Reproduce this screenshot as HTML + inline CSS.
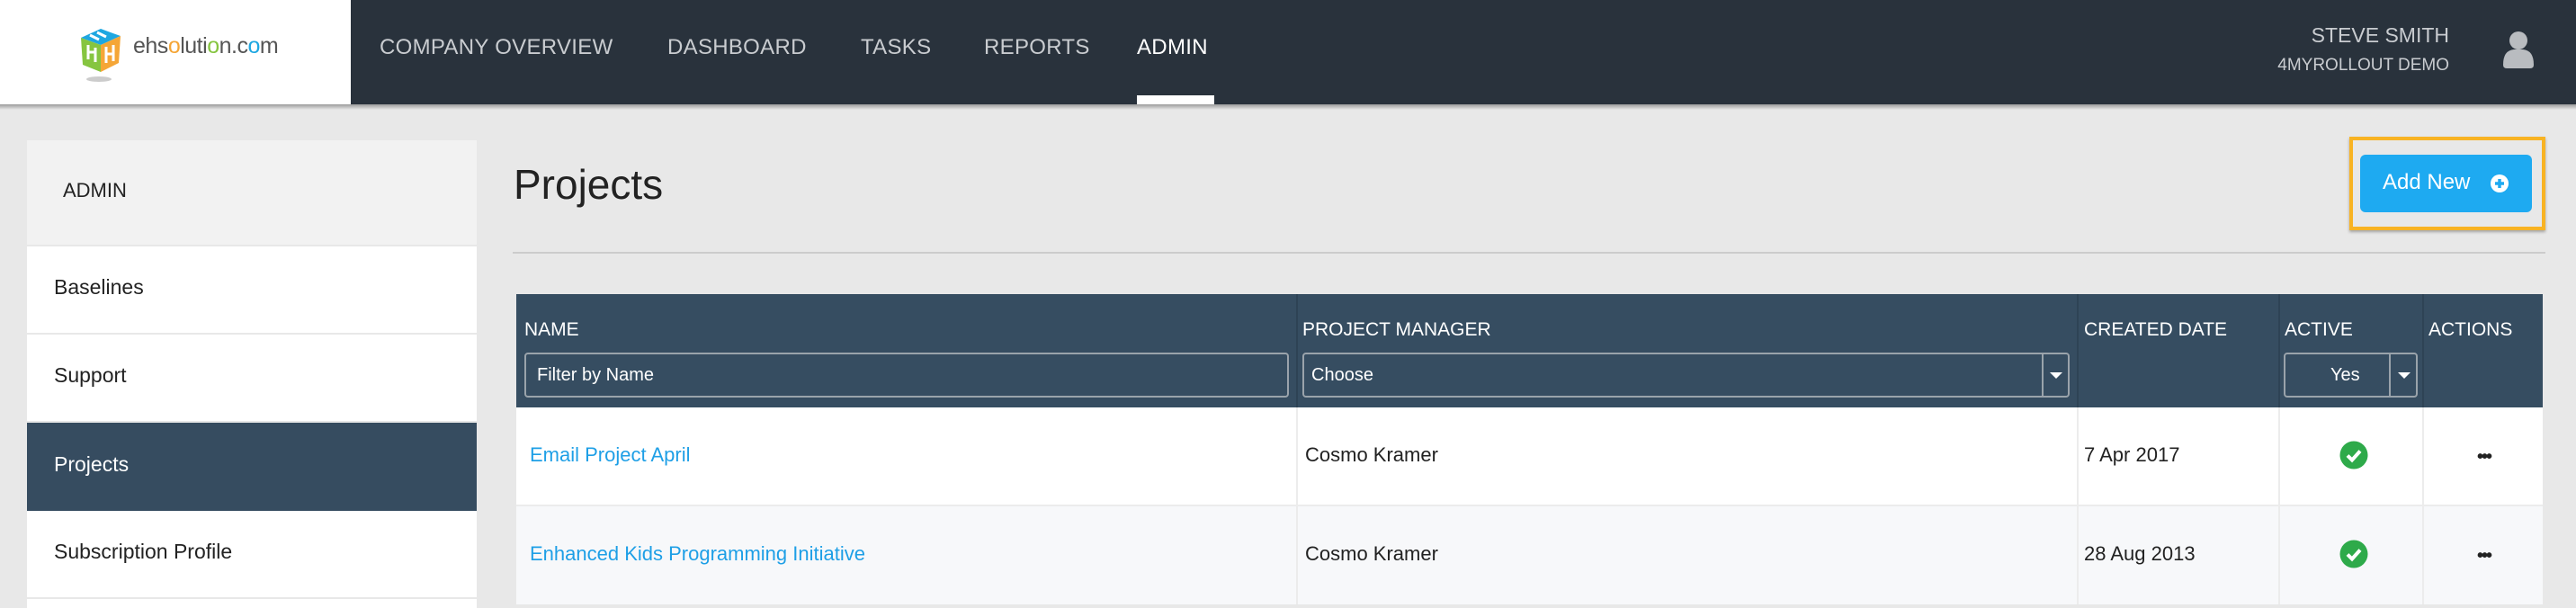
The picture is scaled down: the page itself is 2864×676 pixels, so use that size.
<!DOCTYPE html>
<html><head><meta charset="utf-8"><style>
*{margin:0;padding:0;box-sizing:border-box}
body{width:2864px;height:672px;overflow:hidden;background:#e8e8e8;font-family:"Liberation Sans",sans-serif;position:relative}
.a{position:absolute;white-space:nowrap}
.nav{left:0;top:0;width:2864px;height:116px;background:#29323c}
.navsh{left:0;top:116px;width:2864px;height:6px;background:linear-gradient(#9a9a9a,#e8e8e8)}
.logo{left:0;top:0;width:390px;height:116px;background:#fff}
.ni{color:#c9ccd0;font-size:24px;top:39px;letter-spacing:0.3px}
.side{left:30px;width:500px;background:#fff;color:#222;font-size:23px}
.th{color:#fff;font-size:21px;top:355px}
.sel{border:2px solid #9aa3ab;border-radius:4px;height:50px;top:392px;background:#364d61;color:#fff;font-size:20px}
.caret{width:0;height:0;border-left:7px solid transparent;border-right:7px solid transparent;border-top:7px solid #fff}
.td{font-size:22px;color:#222}
.lk{color:#1e9fe6;font-size:22px}
.vd{width:2px;background:#ececec}
</style></head><body>
<div class="a nav"></div>
<div class="a navsh"></div>
<div class="a logo"></div>
<svg class="a" style="left:86px;top:28px" width="52" height="64" viewBox="0 0 52 64">
<polygon points="4,14 26,4 48,12 26,22" fill="#1ea7e1"/>
<polygon points="4,14 26,22 26,52 6,44" fill="#86c540"/>
<polygon points="26,22 48,12 46,42 26,52" fill="#f5a637"/>
<path d="M12,22 v16 M20,25 v16 M12,30 h8 M32,24 v18 M40,22 v18 M32,32 h8 M14,11 l10,5 M22,8 l10,5" stroke="#fff" stroke-width="3" fill="none"/>
<ellipse cx="24" cy="60" rx="14" ry="3" fill="#ccc"/>
</svg>
<div class="a" style="left:148px;top:37px;font-size:25px;color:#555;letter-spacing:-0.5px">ehs<span style="color:#f5a637">o</span>luti<span style="color:#86c540">o</span>n.c<span style="color:#1ea7e1">o</span>m</div>
<div class="a ni" style="left:422px">COMPANY OVERVIEW</div>
<div class="a ni" style="left:742px">DASHBOARD</div>
<div class="a ni" style="left:957px">TASKS</div>
<div class="a ni" style="left:1094px">REPORTS</div>
<div class="a ni" style="left:1264px;color:#fff">ADMIN</div>
<div class="a" style="left:1264px;top:106px;width:86px;height:10px;background:#fff"></div>
<div class="a" style="right:141px;top:26px;font-size:23px;color:#c9ccd0">STEVE SMITH</div>
<div class="a" style="right:141px;top:62px;font-size:19px;color:#c9ccd0">4MYROLLOUT DEMO</div>
<svg class="a" style="left:2783px;top:34px" width="34" height="42" viewBox="0 0 34 42"><circle cx="17" cy="11" r="10" fill="#b9bcc0"/><path d="M0,38 Q0,22 12,21 L22,21 Q34,22 34,38 Q34,42 30,42 L4,42 Q0,42 0,38Z" fill="#b9bcc0"/></svg>

<div class="a" style="left:30px;top:156px;width:500px;height:116px;background:#f2f2f2"></div>
<div class="a" style="left:70px;top:199px;font-size:22px;color:#222">ADMIN</div>
<div class="a side" style="top:274px;height:96px;padding:32px 30px">Baselines</div>
<div class="a side" style="top:372px;height:96px;padding:32px 30px">Support</div>
<div class="a side" style="top:470px;height:98px;padding:33px 30px;background:#364c60;color:#fff">Projects</div>
<div class="a side" style="top:568px;height:96px;padding:32px 30px">Subscription Profile</div>
<div class="a side" style="top:666px;height:10px"></div>

<div class="a" style="left:571px;top:178px;font-size:46px;color:#222">Projects</div>
<div class="a" style="left:570px;top:280px;width:2260px;height:2px;background:#ccc"></div>
<div class="a" style="left:2612px;top:152px;width:218px;height:104px;border:4px solid #f8b323;box-shadow:0 2px 3px rgba(0,0,0,.3)"></div>
<div class="a" style="left:2624px;top:172px;width:191px;height:64px;background:#1eaaf1;border-radius:6px;color:#fff;font-size:24px;padding:17px 0 0 25px">Add New</div>
<svg class="a" style="left:2769px;top:194px" width="20" height="20" viewBox="0 0 20 20"><circle cx="10" cy="10" r="10" fill="#fff"/><path d="M10,5v10M5,10h10" stroke="#1eaaf1" stroke-width="3.5"/></svg>

<div class="a" style="left:574px;top:327px;width:2253px;height:126px;background:#364d61"></div>
<div class="a" style="left:1441px;top:327px;width:2px;height:126px;background:#2e4355"></div>
<div class="a" style="left:2309px;top:327px;width:2px;height:126px;background:#2e4355"></div>
<div class="a" style="left:2533px;top:327px;width:2px;height:126px;background:#2e4355"></div>
<div class="a" style="left:2693px;top:327px;width:2px;height:126px;background:#2e4355"></div>
<div class="a th" style="left:583px">NAME</div>
<div class="a th" style="left:1448px">PROJECT MANAGER</div>
<div class="a th" style="left:2317px">CREATED DATE</div>
<div class="a th" style="left:2540px">ACTIVE</div>
<div class="a th" style="left:2700px">ACTIONS</div>
<div class="a sel" style="left:583px;width:850px;padding:12px 12px">Filter by Name</div>
<div class="a sel" style="left:1448px;width:853px;padding:12px 8px">Choose</div>
<div class="a" style="left:2270px;top:394px;width:2px;height:46px;background:#9aa3ab"></div>
<div class="a caret" style="left:2279px;top:414px"></div>
<div class="a sel" style="left:2539px;width:149px;padding:12px 0 0 50px">Yes</div>
<div class="a" style="left:2656px;top:394px;width:2px;height:46px;background:#9aa3ab"></div>
<div class="a caret" style="left:2666px;top:414px"></div>

<div class="a" style="left:574px;top:453px;width:2253px;height:108px;background:#fff"></div>
<div class="a" style="left:574px;top:561px;width:2253px;height:2px;background:#ececec"></div>
<div class="a" style="left:574px;top:563px;width:2253px;height:109px;background:#f7f8fa"></div>
<div class="a vd" style="left:1441px;top:453px;height:219px"></div>
<div class="a vd" style="left:2309px;top:453px;height:219px"></div>
<div class="a vd" style="left:2533px;top:453px;height:219px"></div>
<div class="a vd" style="left:2693px;top:453px;height:219px"></div>
<div class="a lk" style="left:589px;top:493px">Email Project April</div>
<div class="a td" style="left:1451px;top:493px">Cosmo Kramer</div>
<div class="a td" style="left:2317px;top:493px">7 Apr 2017</div>
<div class="a lk" style="left:589px;top:603px">Enhanced Kids Programming Initiative</div>
<div class="a td" style="left:1451px;top:603px">Cosmo Kramer</div>
<div class="a td" style="left:2317px;top:603px">28 Aug 2013</div>
<svg class="a" style="left:2601px;top:490px" width="32" height="32" viewBox="0 0 32 32"><circle cx="16" cy="16" r="15.5" fill="#2eaa4a"/><path d="M9,16.5 l5,5 l9,-10" stroke="#fff" stroke-width="4" fill="none"/></svg>
<svg class="a" style="left:2601px;top:600px" width="32" height="32" viewBox="0 0 32 32"><circle cx="16" cy="16" r="15.5" fill="#2eaa4a"/><path d="M9,16.5 l5,5 l9,-10" stroke="#fff" stroke-width="4" fill="none"/></svg>
<div class="a" style="left:2754px;top:497px;font-size:20px;font-weight:bold;color:#222;letter-spacing:-2px">•••</div>
<div class="a" style="left:2754px;top:607px;font-size:20px;font-weight:bold;color:#222;letter-spacing:-2px">•••</div>
</body></html>
